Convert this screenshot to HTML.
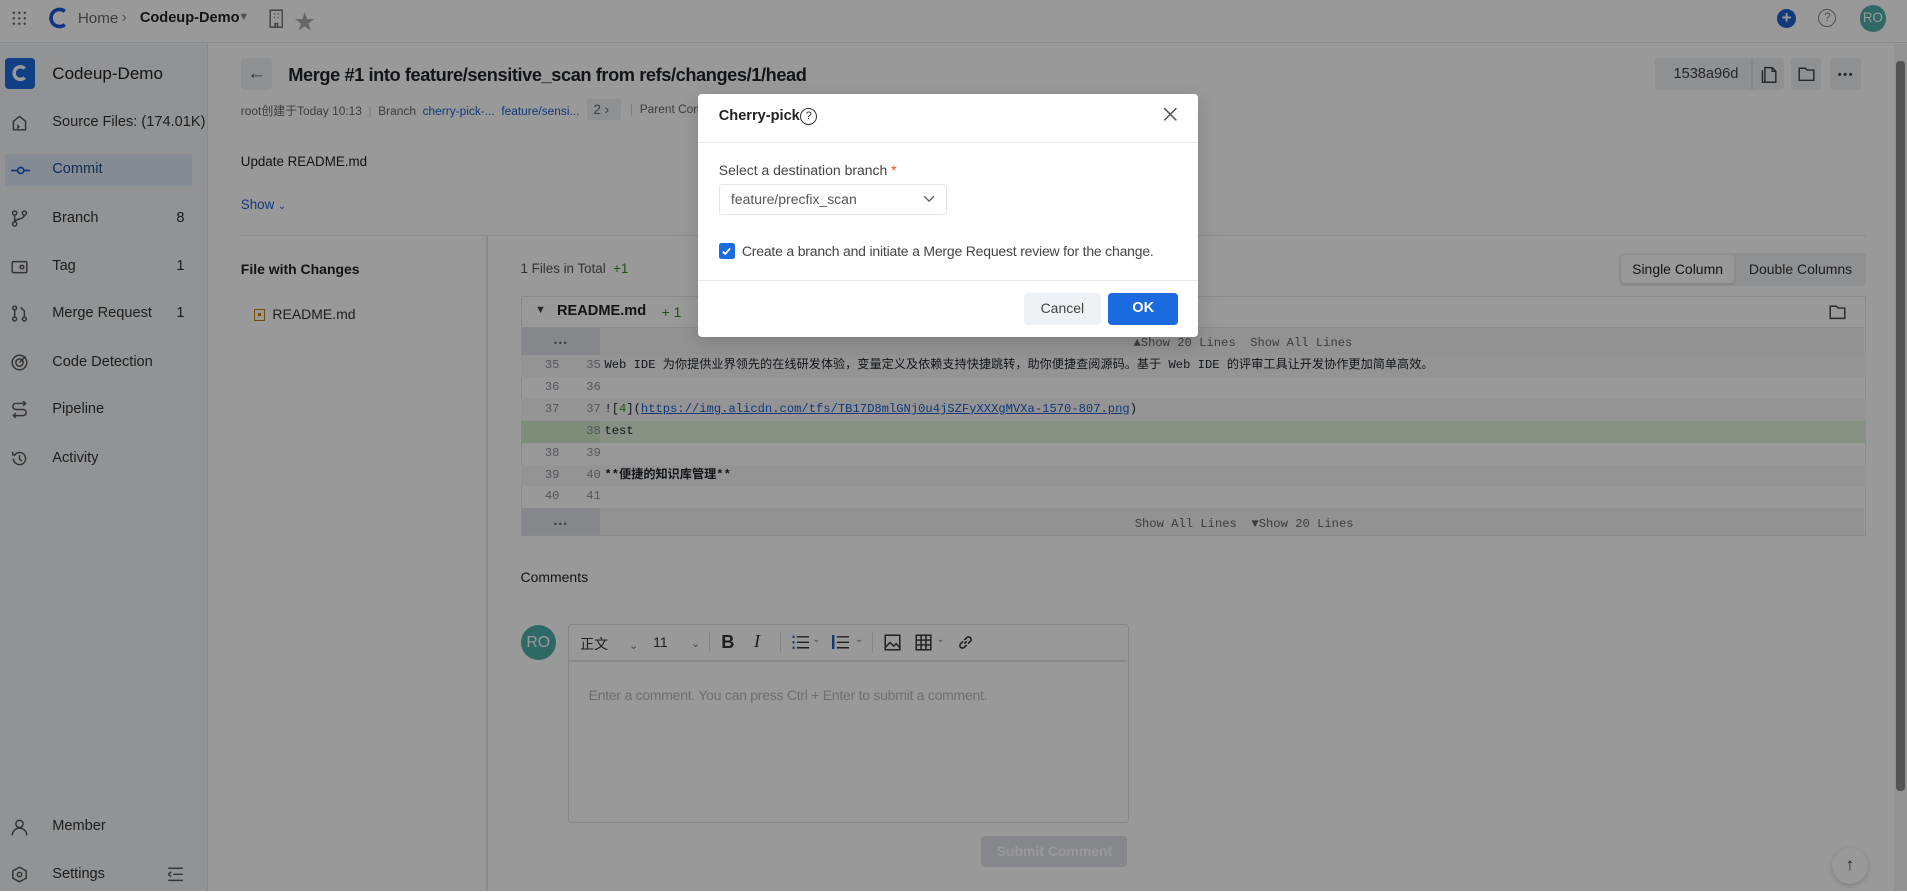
<!DOCTYPE html>
<html><head><meta charset="utf-8"><style>
html{zoom:1.21620}
*{box-sizing:border-box;margin:0;padding:0}
body{width:1568px;height:733px;overflow:hidden;position:relative;background:#fff;font-family:"Liberation Sans","Noto Sans CJK SC",sans-serif;color:#1f2329;font-size:12px}
.a{position:absolute;white-space:nowrap}
.side{position:absolute;left:0;top:35px;width:171px;height:698px;background:#f4f5f7;border-right:1px solid #e5e6e8}
.nav{position:absolute;left:0;width:171px;height:26px;line-height:26px;font-size:12px;color:#333;white-space:nowrap}
.nav .t{position:absolute;left:43px}
.nav .n{position:absolute;left:145px}
.nav svg{position:absolute;left:9px;top:6px}
.mono{font-family:"Liberation Mono","Noto Sans CJK SC",monospace;font-size:10px}
.row{position:absolute;left:428px;width:1106px;height:18px;line-height:18px;white-space:nowrap}
.row .g1,.row .g2{position:absolute;top:0;width:32px;text-align:right;color:#8a8f99;font-family:"Liberation Mono",monospace;font-size:10px}
.row .g1{left:0}.row .g2{left:34px}
.row .c{position:absolute;left:69px;top:0}
.mask{position:absolute;left:0;top:0;width:1568px;height:733px;background:rgba(0,0,0,0.4)}
.btn{position:absolute;border-radius:3px;text-align:center}
</style></head><body>
<div class="a" style="left:0;top:0;width:1568px;height:35px;border-bottom:1px solid #e5e6e8;background:#fff"></div>
<svg class="a" style="left:10px;top:9px" width="12" height="12" viewBox="0 0 12 12" fill="#666"><circle cx="1.5" cy="1.5" r="1"/><circle cx="6" cy="1.5" r="1"/><circle cx="10.5" cy="1.5" r="1"/><circle cx="1.5" cy="6" r="1"/><circle cx="6" cy="6" r="1"/><circle cx="10.5" cy="6" r="1"/><circle cx="1.5" cy="10.5" r="1"/><circle cx="6" cy="10.5" r="1"/><circle cx="10.5" cy="10.5" r="1"/></svg>
<svg class="a" style="left:40px;top:6px" width="16" height="18" viewBox="0 0 16 18"><path d="M13 3.5A7 7 0 1 0 13 14.5" fill="none" stroke="#1b58d8" stroke-width="3"/></svg>
<div class="a" style="left:64px;top:8px;font-size:12.5px;color:#666">Home</div>
<div class="a" style="left:100px;top:7px;font-size:13px;color:#888">›</div>
<div class="a" style="left:115px;top:8px;font-size:12px;font-weight:bold;color:#222">Codeup-Demo</div>
<div class="a" style="left:196px;top:9px;font-size:9px;color:#888">▼</div>
<svg class="a" style="left:221px;top:7px" width="12" height="16" viewBox="0 0 12 16" fill="none" stroke="#777" stroke-width="1.3"><rect x="1" y="1" width="10" height="14"/><path d="M4 4h1M7 4h1M4 7h1M7 7h1M5 15v-3h2v3"/></svg>
<div class="a" style="left:242px;top:4px;font-size:17px;color:#aaa">★</div>
<div class="a" style="left:1461px;top:7px;width:16px;height:16px;border-radius:50%;background:#1f5fd0;color:#fff;text-align:center;line-height:15px;font-size:14px;font-weight:bold">+</div>
<div class="a" style="left:1495px;top:7px;width:15px;height:15px;border-radius:50%;border:1.3px solid #888;color:#888;text-align:center;line-height:13px;font-size:10px">?</div>
<div class="a" style="left:1529px;top:4px;width:22px;height:22px;border-radius:50%;background:#4fb0a8;color:#fff;text-align:center;line-height:22px;font-size:11px">RO</div>
<div class="side"></div>
<div class="a" style="left:4px;top:48px;width:25px;height:25px;background:#1b6ae0;border-radius:3px"></div>
<svg class="a" style="left:9px;top:53px" width="15" height="15" viewBox="0 0 16 16"><path d="M12 4A5.5 5.5 0 1 0 12 12" fill="none" stroke="#fff" stroke-width="3"/></svg>
<div class="a" style="left:43px;top:53px;font-size:14px;color:#222">Codeup-Demo</div>
<div class="nav" style="top:88px"><svg width="14" height="14" viewBox="0 0 14 14" fill="none" stroke="#555" stroke-width="1.2"><path d="M2 6l5-4 5 4v7H2z"/><path d="M5 9l1.5 1.5L5 12"/></svg><span class="t">Source Files: (174.01K)</span></div>
<div class="a" style="left:4px;top:127px;width:154px;height:26px;background:#dce8f8;border-radius:2px"></div>
<div class="nav" style="top:127px"><svg width="16" height="14" viewBox="0 0 16 14" fill="none" stroke="#1b5fc9" stroke-width="1.4"><path d="M0 7h5M11 7h5"/><circle cx="8" cy="7" r="2.5"/></svg><span class="t" style="color:#1f4e8c">Commit</span></div>
<div class="nav" style="top:167px"><svg width="14" height="14" viewBox="0 0 14 14" fill="none" stroke="#555" stroke-width="1.2"><circle cx="3" cy="2.5" r="1.7"/><circle cx="11" cy="2.5" r="1.7"/><circle cx="3" cy="11.5" r="1.7"/><path d="M3 4v6M11 4c0 4-8 3-8 6"/></svg><span class="t">Branch</span><span class="n">8</span></div>
<div class="nav" style="top:206px"><svg width="14" height="14" viewBox="0 0 14 14" fill="none" stroke="#555" stroke-width="1.2"><rect x="1" y="3" width="12" height="9" rx="1"/><circle cx="9" cy="7.5" r="1.5"/></svg><span class="t">Tag</span><span class="n">1</span></div>
<div class="nav" style="top:245px"><svg width="14" height="14" viewBox="0 0 14 14" fill="none" stroke="#555" stroke-width="1.2"><circle cx="3" cy="2.5" r="1.6"/><circle cx="3" cy="11.5" r="1.6"/><circle cx="11" cy="11.5" r="1.6"/><path d="M3 4v6M11 10V5L8 2"/></svg><span class="t">Merge Request</span><span class="n">1</span></div>
<div class="nav" style="top:285px"><svg width="14" height="14" viewBox="0 0 14 14" fill="none" stroke="#555" stroke-width="1.2"><circle cx="7" cy="7" r="6"/><circle cx="7" cy="7" r="3"/><path d="M7 7l5-5"/></svg><span class="t">Code Detection</span></div>
<div class="nav" style="top:324px"><svg width="14" height="14" viewBox="0 0 14 14" fill="none" stroke="#555" stroke-width="1.2"><path d="M12 2H4a2.5 2.5 0 0 0 0 5h6a2.5 2.5 0 0 1 0 5H2M10 0l2 2-2 2M4 10l-2 2 2 2"/></svg><span class="t">Pipeline</span></div>
<div class="nav" style="top:364px"><svg width="14" height="14" viewBox="0 0 14 14" fill="none" stroke="#555" stroke-width="1.2"><path d="M2 7a5 5 0 1 0 1.5-3.5M1.5 1.5v2.5H4"/><path d="M7 4v3.5l2 1.5"/></svg><span class="t">Activity</span></div>
<div class="nav" style="top:667px"><svg width="14" height="14" viewBox="0 0 14 14" fill="none" stroke="#555" stroke-width="1.2"><circle cx="7" cy="4" r="3"/><path d="M1 13.5a6 6 0 0 1 12 0"/></svg><span class="t">Member</span></div>
<div class="nav" style="top:706px"><svg width="14" height="14" viewBox="0 0 14 14" fill="none" stroke="#555" stroke-width="1.2"><path d="M7 1l5.5 3v6L7 13 1.5 10V4z"/><circle cx="7" cy="7" r="1.8"/></svg><span class="t">Settings</span><svg style="left:137px;top:7px" width="14" height="12" viewBox="0 0 14 12" fill="none" stroke="#555" stroke-width="1.2"><path d="M1 1h12M5 6h8M1 11h12M1 6l2.5-2M1 6l2.5 2"/></svg></div>
<div class="a" style="left:198px;top:48px;width:26px;height:26px;background:#eef0f3;border-radius:3px;text-align:center;line-height:24px;font-size:15px;color:#555">←</div>
<div class="a" style="left:237px;top:53px;font-size:15px;font-weight:bold;color:#1f2329;letter-spacing:-0.35px">Merge #1 into feature/sensitive_scan from refs/changes/1/head</div>
<div class="a" style="left:198px;top:84px;font-size:9.8px;color:#666">root创建于Today 10:13 <span style="color:#ccc">&nbsp;|&nbsp;</span> Branch &nbsp;<span style="color:#1b5fc9">cherry-pick-...&nbsp; feature/sensi...</span></div>
<div class="a" style="left:483px;top:81px;width:28px;height:18px;background:#eef0f3;border-radius:2px;font-size:11px;color:#666;line-height:18px;padding-left:5px">2 ›</div>
<div class="a" style="left:518px;top:84px;font-size:9.8px;color:#666"><span style="color:#ccc">|</span>&nbsp; Parent Commit</div>
<div class="a" style="left:1361px;top:48px;width:106px;height:26px;background:#eef0f3;border-radius:3px"></div>
<div class="a" style="left:1376px;top:54px;font-size:12px;color:#444">1538a96d</div>
<div class="a" style="left:1440px;top:48px;width:1px;height:26px;background:#dfe1e5"></div>
<svg class="a" style="left:1447px;top:53px" width="14" height="16" viewBox="0 0 14 16" fill="none" stroke="#444" stroke-width="1.2"><path d="M4 3h6l3 3v9H4z M10 3v3h3M2 5v10h9"/></svg>
<div class="a" style="left:1473px;top:48px;width:24px;height:26px;background:#eef0f3;border-radius:3px"></div>
<svg class="a" style="left:1478px;top:55px" width="14" height="12" viewBox="0 0 14 12" fill="none" stroke="#444" stroke-width="1.2"><path d="M1 1h5l1.5 1.5H13V11H1z"/></svg>
<div class="a" style="left:1505px;top:48px;width:25px;height:26px;background:#eef0f3;border-radius:3px"></div>
<svg class="a" style="left:1510px;top:59px" width="15" height="4" viewBox="0 0 15 4" fill="#444"><circle cx="3" cy="2" r="1.3"/><circle cx="7.5" cy="2" r="1.3"/><circle cx="12" cy="2" r="1.3"/></svg>
<div class="a" style="left:198px;top:127px;font-size:11px;color:#222">Update README.md</div>
<div class="a" style="left:198px;top:162px;font-size:11px;color:#1b5fc9">Show <span style="font-size:8px">⌄</span></div>
<div class="a" style="left:198px;top:193px;width:1336px;height:1px;background:#e5e6e8"></div>
<div class="a" style="left:400px;top:193px;width:1px;height:540px;background:#e5e6e8"></div>
<div class="a" style="left:198px;top:215px;font-size:11.5px;font-weight:bold;color:#222">File with Changes</div>
<div class="a" style="left:209px;top:254px;width:9px;height:10px;border:1.3px solid #c27c18"></div>
<div class="a" style="left:212px;top:257px;width:3px;height:3px;background:#c27c18"></div>
<div class="a" style="left:224px;top:252px;font-size:11.5px;color:#333">README.md</div>
<div class="a" style="left:428px;top:215px;font-size:11px;color:#555">1 Files in Total &nbsp;<span style="color:#3a8a23">+1</span></div>
<div class="a" style="left:1331px;top:208px;width:203px;height:27px;background:#eef0f3;border-radius:3px"></div>
<div class="a" style="left:1333px;top:210px;width:93px;height:23px;background:#fff;border-radius:3px;box-shadow:0 1px 2px rgba(0,0,0,.1)"></div>
<div class="a" style="left:1342px;top:215px;font-size:11.5px;color:#222">Single Column</div>
<div class="a" style="left:1438px;top:215px;font-size:11.5px;color:#333">Double Columns</div>
<div class="a" style="left:428px;top:243px;width:1106px;height:198px;border:1px solid #e5e6e8"></div>
<div class="a" style="left:440px;top:250px;font-size:9px;color:#444">▼</div>
<div class="a" style="left:458px;top:249px;font-size:12px;font-weight:bold;color:#222">README.md</div>
<div class="a" style="left:544px;top:250px;font-size:11.5px;color:#3a8a23">+ 1</div>
<svg class="a" style="left:1504px;top:251px" width="14" height="12" viewBox="0 0 14 12" fill="none" stroke="#444" stroke-width="1.2"><path d="M1 1h5l1.5 1.5H13V11H1z"/></svg>
<div class="a" style="left:429px;top:269px;width:1104px;height:1px;background:#e5e6e8"></div>
<div class="a" style="left:429px;top:270px;width:64px;height:22px;background:#dfe2e6"></div>
<div class="a" style="left:493px;top:270px;width:1040px;height:22px;background:#f3f4f6"></div>
<svg class="a" style="left:455px;top:280px" width="12" height="3" viewBox="0 0 12 3" fill="#666"><circle cx="2" cy="1.5" r="1"/><circle cx="6" cy="1.5" r="1"/><circle cx="10" cy="1.5" r="1"/></svg>
<div class="a mono" style="left:932px;top:276px;color:#666">▲Show 20 Lines &nbsp;Show All Lines</div>
<div class="row mono" style="top:292px;background:#f7f7f8"><span class="g1">35</span><span class="g2">35</span><span class="c">Web IDE 为你提供业界领先的在线研发体验，变量定义及依赖支持快捷跳转，助你便捷查阅源码。基于 Web IDE 的评审工具让开发协作更加简单高效。</span></div>
<div class="row mono" style="top:310px"><span class="g1">36</span><span class="g2">36</span></div>
<div class="row mono" style="top:328px;background:#f7f7f8"><span class="g1">37</span><span class="g2">37</span><span class="c">![<span style="color:#3a8a23">4</span>](<span style="color:#1b5fc9;text-decoration:underline">https://img.alicdn.com/tfs/TB17D8mlGNj0u4jSZFyXXXgMVXa-1570-807.png</span>)</span></div>
<div class="row mono" style="top:346px;background:#e2f2dc"><span class="g1" style="background:#d0ebc7;width:65px;left:0;height:18px"></span><span class="g2">38</span><span class="c">test</span></div>
<div class="row mono" style="top:364px"><span class="g1">38</span><span class="g2">39</span></div>
<div class="row mono" style="top:382px;background:#f7f7f8"><span class="g1">39</span><span class="g2">40</span><span class="c" style="font-weight:bold">**便捷的知识库管理**</span></div>
<div class="row mono" style="top:400px"><span class="g1">40</span><span class="g2">41</span></div>
<div class="a" style="left:429px;top:418px;width:64px;height:22px;background:#dfe2e6"></div>
<div class="a" style="left:493px;top:418px;width:1040px;height:22px;background:#f3f4f6"></div>
<svg class="a" style="left:455px;top:429px" width="12" height="3" viewBox="0 0 12 3" fill="#666"><circle cx="2" cy="1.5" r="1"/><circle cx="6" cy="1.5" r="1"/><circle cx="10" cy="1.5" r="1"/></svg>
<div class="a mono" style="left:933px;top:425px;color:#666">Show All Lines &nbsp;▼Show 20 Lines</div>
<div class="a" style="left:428px;top:468px;font-size:11.5px;color:#222">Comments</div>
<div class="a" style="left:428px;top:514px;width:29px;height:29px;border-radius:50%;background:#4fb0a8;color:#fff;text-align:center;line-height:29px;font-size:13px">RO</div>
<div class="a" style="left:467px;top:513px;width:461px;height:164px;border:1px solid #dcdfe4;border-radius:3px"></div>
<div class="a" style="left:468px;top:543px;width:459px;height:1px;background:#e5e6e8"></div>
<div class="a" style="left:477px;top:521px;font-size:11.5px;color:#333">正文 <span style="margin-left:14px;font-size:9px;color:#777">⌄</span></div>
<div class="a" style="left:537px;top:521px;font-size:11.5px;color:#333">11 <span style="margin-left:16px;font-size:9px;color:#777">⌄</span></div>
<div class="a" style="left:583px;top:520px;width:1px;height:17px;background:#e0e0e0"></div>
<div class="a" style="left:593px;top:519px;font-size:15px;color:#333;font-weight:bold">B</div>
<div class="a" style="left:620px;top:519px;font-size:15px;color:#333;font-style:italic;font-family:'Liberation Serif',serif">I</div>
<div class="a" style="left:641px;top:520px;width:1px;height:17px;background:#e0e0e0"></div>
<svg class="a" style="left:651px;top:522px" width="14" height="12" viewBox="0 0 14 12" fill="none" stroke="#333" stroke-width="1.2"><path d="M4 1.5h10M4 6h10M4 10.5h10"/><path d="M0.5 1.5h1.5M0.5 6h1.5M0.5 10.5h1.5" stroke="#1b5fc9" stroke-width="2"/></svg>
<div class="a" style="left:668px;top:521px;font-size:8px;color:#777">⌄</div>
<svg class="a" style="left:684px;top:522px" width="14" height="12" viewBox="0 0 14 12" fill="none" stroke="#333" stroke-width="1.2"><path d="M4 1.5h10M4 6h10M4 10.5h10"/><path d="M1 0v12" stroke="#1b5fc9" stroke-width="2"/></svg>
<div class="a" style="left:703px;top:521px;font-size:8px;color:#777">⌄</div>
<div class="a" style="left:717px;top:520px;width:1px;height:17px;background:#e0e0e0"></div>
<svg class="a" style="left:727px;top:521px" width="14" height="14" viewBox="0 0 14 14" fill="none" stroke="#333" stroke-width="1.2"><rect x="1" y="1" width="12" height="12"/><path d="M1 11l4-4 3 3 2-2 3 3"/></svg>
<svg class="a" style="left:752px;top:521px" width="14" height="14" viewBox="0 0 14 14" fill="none" stroke="#333" stroke-width="1.2"><rect x="1" y="1" width="12" height="12"/><path d="M1 5h12M1 9h12M5 1v12M9 1v12"/></svg>
<div class="a" style="left:770px;top:521px;font-size:8px;color:#777">⌄</div>
<svg class="a" style="left:787px;top:521px" width="14" height="14" viewBox="0 0 14 14" fill="none" stroke="#333" stroke-width="1.3"><path d="M6 8l2-2M5 6L3 8a2 2 0 0 0 3 3l2-2M9 8l2-2a2 2 0 0 0-3-3L6 5"/></svg>
<div class="a" style="left:484px;top:565px;font-size:11.5px;color:#b4b8bf;letter-spacing:-0.2px">Enter a comment. You can press Ctrl + Enter to submit a comment.</div>
<div class="a" style="left:807px;top:687px;width:120px;height:26px;background:#dfe2e6;border-radius:3px;color:#fff;text-align:center;line-height:26px;font-size:11.5px;font-weight:bold">Submit Comment</div>
<div class="a" style="left:1506px;top:697px;width:30px;height:30px;border-radius:50%;background:#fff;box-shadow:0 1px 4px rgba(0,0,0,.2);text-align:center;line-height:28px;font-size:14px;color:#333">↑</div>
<div class="a" style="left:1557px;top:36px;width:11px;height:697px;background:#f3f3f3"></div>
<div class="a" style="left:1559px;top:50px;width:7px;height:600px;background:#8a8a8a;border-radius:3px"></div>
<div class="mask"></div>
<div class="a" style="left:574px;top:77px;width:411px;height:200px;background:#fff;border-radius:3px;box-shadow:0 4px 16px rgba(0,0,0,.15)"></div>
<div class="a" style="left:591px;top:89px;font-size:12px;font-weight:bold;color:#222">Cherry-pick</div>
<div class="a" style="left:658px;top:89px;width:14px;height:14px;border-radius:50%;border:1.2px solid #333;text-align:center;line-height:12px;font-size:9px;color:#333">?</div>
<svg class="a" style="left:956px;top:88px" width="12" height="12" viewBox="0 0 12 12" stroke="#555" stroke-width="1.3"><path d="M1 1l10 10M11 1L1 11"/></svg>
<div class="a" style="left:574px;top:117px;width:411px;height:1px;background:#e8e8e8"></div>
<div class="a" style="left:591px;top:133px;font-size:11.5px;color:#444">Select a destination branch <span style="color:#e5493a">*</span></div>
<div class="a" style="left:591px;top:151px;width:188px;height:26px;border:1px solid #e2e4e8;border-radius:3px"></div>
<div class="a" style="left:601px;top:157px;font-size:11.5px;color:#555">feature/precfix_scan</div>
<svg class="a" style="left:759px;top:160px" width="10" height="6" viewBox="0 0 10 6" fill="none" stroke="#666" stroke-width="1.2"><path d="M1 1l4 4 4-4"/></svg>
<div class="a" style="left:591px;top:200px;width:13px;height:13px;background:#1b6ae0;border-radius:2px"></div>
<svg class="a" style="left:593px;top:202px" width="9" height="9" viewBox="0 0 9 9" fill="none" stroke="#fff" stroke-width="1.5"><path d="M1.5 4.5l2 2 4-4.5"/></svg>
<div class="a" style="left:610px;top:200px;font-size:11.5px;color:#444;letter-spacing:-0.15px">Create a branch and initiate a Merge Request review for the change.</div>
<div class="a" style="left:574px;top:230px;width:411px;height:1px;background:#e8e8e8"></div>
<div class="btn" style="left:842px;top:241px;width:63px;height:26px;background:#eef1f5;line-height:26px;font-size:11.5px;color:#444">Cancel</div>
<div class="btn" style="left:911px;top:241px;width:58px;height:26px;background:#1b6ae0;line-height:26px;font-size:12px;color:#fff;font-weight:bold">OK</div>
</body></html>
